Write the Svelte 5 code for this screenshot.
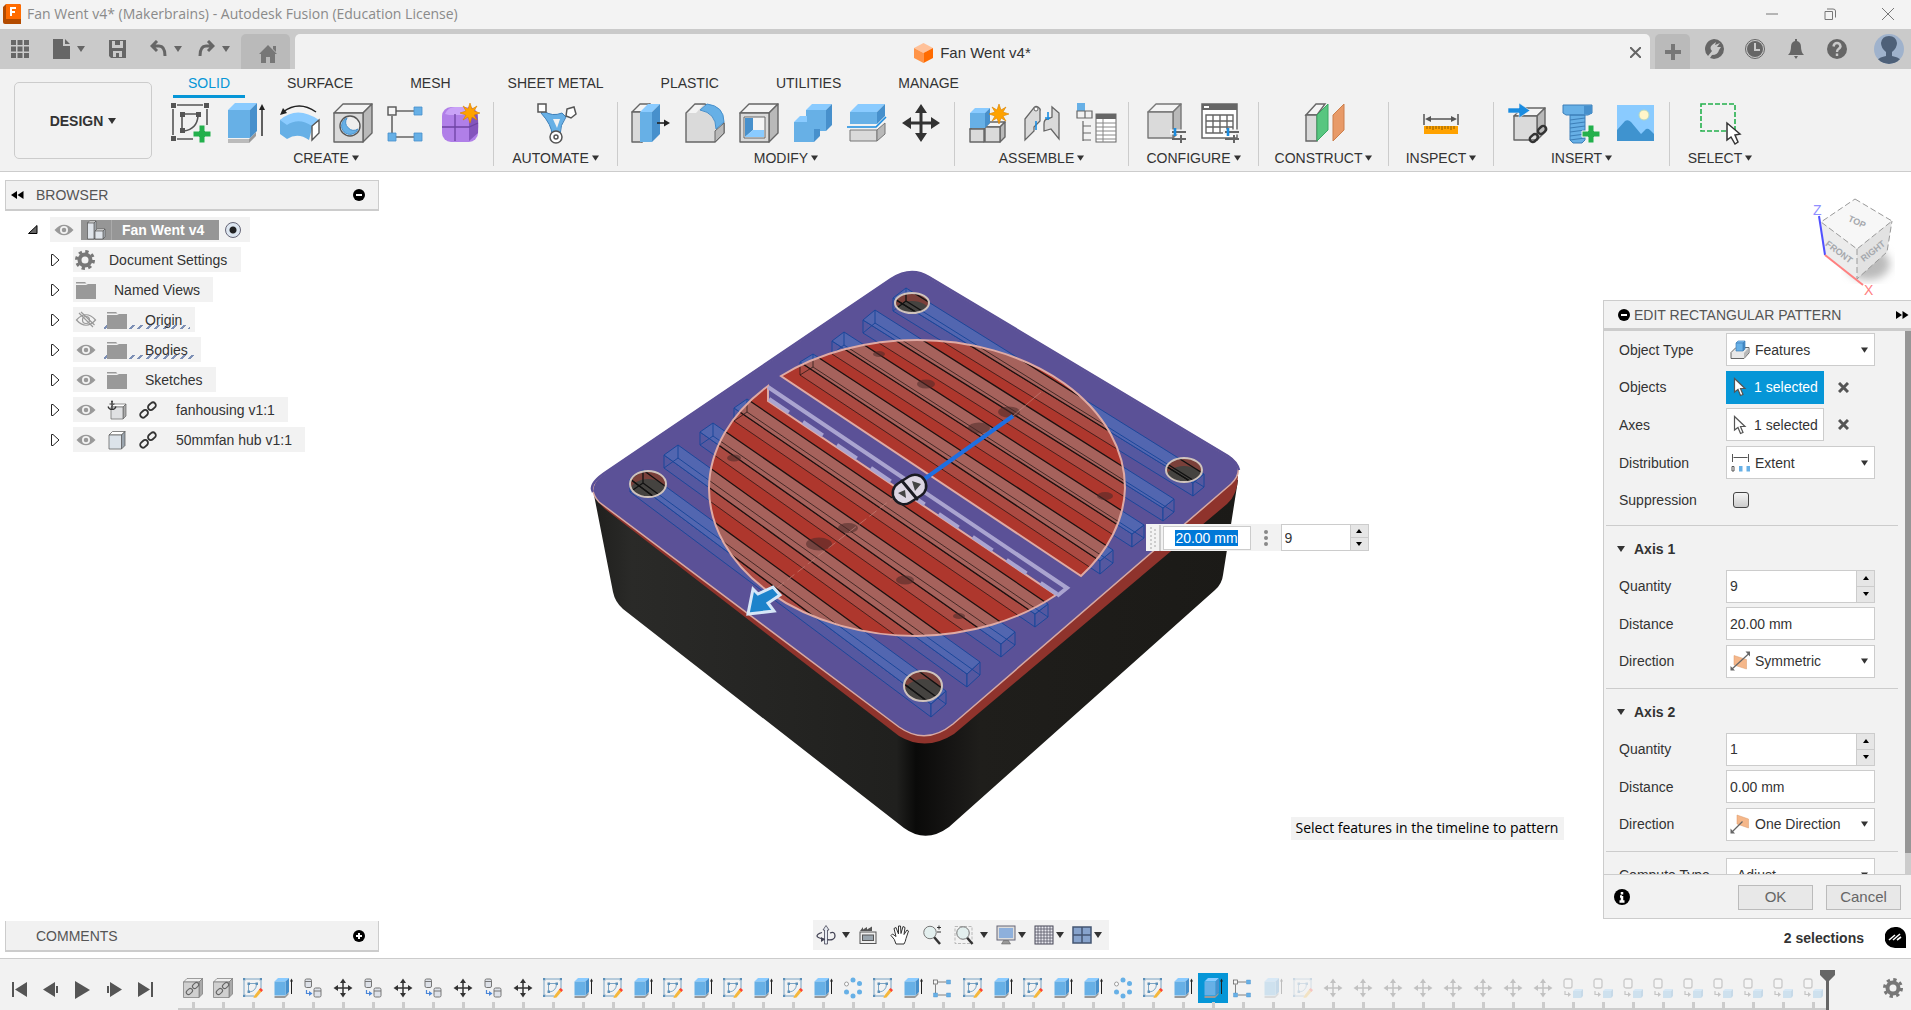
<script>
    import { onMount } from 'svelte'

    // colours of the three faces: front, top, side
    const BLUE = ['#67b0e6', '#8acbff', '#4790cc'];
    const GREY = ['#dadada', '#f4f4f4', '#b9b9b9'];

    function cube(x, y, w, h, d, [front, top, side], line = 'none') {
        const r = x + w, b = y + h;
        return `<g stroke="${line}" stroke-width="1.4" stroke-linejoin="round">
            <path fill="${top}" d="M${x} ${y + d}L${x + d} ${y}H${r}L${r - d} ${y + d}Z"/>
            <path fill="${side}" d="M${r - d} ${y + d}L${r} ${y}V${b - d}L${r - d} ${b}Z"/>
            <path fill="${front}" d="M${x} ${y + d}H${r - d}V${b}H${x}Z"/></g>`;
    }

    const spark = (x, y) => `<path transform="translate(${x} ${y})" fill="#ffa200" stroke="#d98200" stroke-width=".6"
        d="M0-10L2-4 7-7 4-2 10 0 4 2 7 7 2 4 0 10-2 4-7 7-4 2-10 0-4-2-7-7-2-4Z"/>`;
    const plus = (x, y) => `<path transform="translate(${x} ${y})" fill="#23b04c" stroke="#f2f2f2" stroke-width="1"
        d="M-3-9H3V-3H9V3H3V9H-3V3H-9V-3H-3Z"/>`;
    const chain = `<g fill="none" stroke="#333" stroke-width="2.4"><rect x="-3" y="-6" width="6" height="9" rx="3" transform="translate(3 -3) rotate(48)"/>
        <rect x="-3" y="-3" width="6" height="9" rx="3" transform="translate(-3 3) rotate(48)"/></g>`;
    const sliders = (x, y) => `<g transform="translate(${x} ${y})"><path stroke="#f2f2f2" stroke-width="5" d="M-2 0H15"/>
        <path stroke="#666" stroke-width="2" d="M0 0H14M0 7H14M9 3V11"/><path stroke="#1a8ce0" stroke-width="2.6" d="M3-4V4"/></g>`;
    const move = `<path fill="#333" d="M20 1l6 9h-4.500v8.500h8.500V14l9 6-9 6v-4.500h-8.500V30h4.500l-6 9-6-9h4.500v-8.500H10V26l-9-6 9-6v4.500h8.500V10H14z"/>`;
    const slots = `<path stroke="#666" stroke-width="1.600" d="M9 8H27M5 13V31M9 34H27"/><rect x="1" y="4" width="8" height="8" fill="#f6f6f6" stroke="#555" stroke-width="1.400"/>
        <path fill="#67b0e6" stroke="#4790cc" stroke-width=".8" d="M27 4h8v8h-8zM27 30h8v8h-8zM1 30h8v8H1z"/>`;
    const sketch = `<path fill="none" stroke="#555" stroke-width="1.600" d="M6 2H32M2 6V32M36 6V22M6 36H22M11 14V26M14 11H26M27 13Q26 26 13 28"/>
        <path fill="#555" d="M0 0h5v5H0zM33 0h5v5h-5zM0 33h5v5H0zM9 9h5v5H9zM25 9h5v5h-5zM9 25h5v5H9z"/>`;

    const icons = {
        sketch: sketch + plus(31, 31),
        extrude: `<path fill="#999" d="M3 36H24L31 29V33L24 40H3Z"/><path fill="#bbb" d="M3 36H24V40H3Z"/>`
            + cube(3, 0, 29, 35, 7, BLUE) + '<path stroke="#222" stroke-width="1.400" d="M37 4V33"/><path fill="#222" d="M37 1l3 6h-6z"/>',
        revolve: `<path fill="#67b0e6" d="M1 17Q18 7 35 18L30 37Q19 29 8 36L1 31Z"/><path fill="#8acbff" d="M1 17Q18 2 40 17L33 23Q20 14 8 22Z"/>
            <path fill="#fff" stroke="#555" stroke-width="1.400" d="M33 23L40 17V30L33 37Z"/><path fill="none" stroke="#222" stroke-width="1.500" d="M4 9Q20-3 37 9"/><path fill="#222" d="M1 12l3-7 4 5z"/>`,
        hole: cube(1, 1, 38, 38, 9, GREY, '#666') + `<circle cx="17" cy="23" r="10" fill="#eee" stroke="#555" stroke-width="1.400"/>
            <path fill="#67b0e6" stroke="#4790cc" d="M14 15a8.500 8.500 0 1 0 11 11A8 8 0 0 1 14 15Z"/>`,
        pattern: slots,
        form: `<rect x="1" y="4" width="36" height="35" rx="9" fill="#b07fe8"/><path fill="#c9a2f7" d="M4 11Q7 4 14 4H30L26 12H8Z"/><path fill="#8455bd" d="M28 12L35 8Q38 14 37 30L28 38Z"/>
            <path fill="none" stroke="#6d43a3" stroke-width="1.300" d="M14 11V38M1 24H28L37 20"/>` + spark(29, 10),
        automate: `<path fill="#67b0e6" stroke="#3d7fb8" d="M8 8Q16 14 26 10L30 14Q24 22 24 32H16Q16 22 5 10Z"/><path fill="#f2f2f2" d="M17 16h7l-3 9z"/>
            <g fill="#fff" stroke="#555" stroke-width="1.500"><path d="M2 1h8v8H2zM31 6l7-2 2 7-5 4-5-2z"/><circle cx="20" cy="34" r="6"/><circle cx="20" cy="34" r="2"/></g>`,
        pushPull: cube(1, 1, 18, 38, 8, GREY, '#666') + cube(9, 1, 20, 38, 8, BLUE) + '<path stroke="#222" stroke-width="1.600" d="M26 20H35"/><path fill="#222" d="M39 20l-6-3.500v7z"/>',
        fillet: `<path fill="#dadada" stroke="#666" stroke-width="1.400" d="M1 10L10 1H20L39 20V30L30 39H1Z"/><path fill="#b9b9b9" stroke="#666" d="M30 28L39 20V30L30 39Z"/>
            <path fill="#67b0e6" stroke="#4790cc" d="M15 7L22 1Q39 3 39 19L31 26Q31 10 15 7Z"/><path fill="#f4f4f4" d="M3 10L10 2H18L11 10Z"/>`,
        shell: cube(1, 1, 38, 38, 9, GREY, '#666') + '<path fill="#f4f4f4" stroke="#666" d="M5 14H26V35H5Z"/><path fill="#4790cc" d="M6 15H14V27L6 34Z"/><path fill="#8acbff" d="M14 27H25V34H6Z"/>',
        combine: cube(13, 1, 26, 27, 6, BLUE) + cube(1, 13, 26, 26, 6, BLUE) + '<path fill="#67b0e6" d="M14 9H33V26H21V38H3V20H14Z"/>',
        split: cube(3, 1, 35, 20, 8, BLUE) + '<path fill="#dadada" stroke="#777" d="M3 27H30V38H3Z"/><path fill="#b9b9b9" stroke="#777" d="M30 27L38 20V31L30 38Z"/><path fill="none" stroke="#1a8ce0" stroke-width="1.600" d="M0 24H29L39 14"/>',
        move,
        component: cube(2, 22, 18, 17, 4, GREY, '#666') + cube(17, 19, 20, 20, 5, GREY, '#666') + cube(2, 5, 20, 20, 5, BLUE) + spark(31, 11),
        joint: `<path fill="#dadada" stroke="#666" stroke-width="1.300" d="M3 16L11 6Q13 2 16 4T18 8V18L12 24V28L3 37ZM22 21Q22 16 26 16L30 14V4L37 10V36L29 26L22 28Z"/>
            <circle cx="14" cy="6" r="2" fill="#fff" stroke="#666"/><path stroke="#1a8ce0" stroke-width="1.600" d="M14 18V27M26 9V17M23 15H28"/>`,
        bom: `<rect x="1" y="0" width="8" height="8" fill="#67b0e6"/><path fill="none" stroke="#666" stroke-width="1.200" d="M1 8H16V15H1ZM9 8V15M7 18V38M7 23H15M7 30H15M7 37H15"/>
            <rect x="20" y="11" width="20" height="28" fill="#fff" stroke="#666"/><path fill="#666" d="M20 11h20v5H20z"/><path stroke="#888" d="M20 20H40M20 24H40M20 28H40M20 32H40M20 36H40M27 16V39"/>`,
        configure: cube(1, 1, 33, 34, 8, GREY, '#777') + sliders(25, 29),
        table: `<rect x="1" y="1" width="35" height="34" fill="#fff" stroke="#666" stroke-width="1.500"/><path fill="#666" d="M1 1h35v6H1z"/><path fill="#fff" d="M3 3h5v2H3z"/>
            <path fill="none" stroke="#666" stroke-width="1.400" d="M5 12H32V30H5ZM5 18H32M5 24H32M12 12V30M19 12V30M26 12V30"/>` + sliders(24, 29),
        construct: `<path fill="#f4f4f4" stroke="#666" stroke-width="1.400" d="M2 12L12 1H21L13 12Z"/><path fill="#dadada" stroke="#666" stroke-width="1.400" d="M2 12H13V38H2Z"/>
            <path fill="#58c680" stroke="#3aa863" d="M13 12L24 1V27L13 38Z"/><path fill="#e89a68" stroke="#cc7f4c" d="M29 12L40 1V27L29 38Z"/>`,
        measure: `<path fill="none" stroke="#555" stroke-width="1.500" d="M3 11V22M37 11V22M6 16H34"/><path fill="#555" d="M4 16l6-3v6zM36 16l-6-3v6z"/>
            <path fill="#ffa200" d="M3 23h34v8H3z"/><path stroke="#8a5a00" d="M6 23v3M9 23v3M12 23v4M15 23v3M18 23v3M21 23v4M24 23v3M27 23v3M30 23v4M33 23v3"/>`,
        insert: cube(6, 5, 31, 32, 8, GREY, '#666') + '<path fill="#1a8ce0" stroke="#f2f2f2" stroke-width=".6" d="M0 5h11V0l11 7.500L11 15v-5H0z"/>'
            + `<g transform="translate(30 31)">${chain}</g>`,
        bolt: `<path fill="#67b0e6" stroke="#3d7fb8" d="M1 2h29v8l-4 2H4l-3-2zM8 12h15v25l-3 3h-9l-3-3z"/><path fill="#4790cc" d="M22 3h8v8h-8z"/>
            <path stroke="#3d7fb8" stroke-width="1.200" d="M8 17L23 15M8 21L23 19M8 25L23 23M8 29L23 27M8 33L23 31M8 37L23 35"/>` + plus(29, 31),
        canvas: `<rect x="1" y="2" width="37" height="36" fill="#8acbff"/><circle cx="28" cy="12" r="5" fill="#fff6c9" stroke="#b7d9c0"/>
            <path fill="#3f93cf" d="M1 27L9 18Q12 16 15 19L25 31 30 26Q32 25 34 27L38 31V38H1Z"/>`,
        select: `<rect x="1" y="1" width="34" height="27" fill="none" stroke="#23b04c" stroke-width="1.600" stroke-dasharray="5 2"/>
            <path fill="#fff" stroke="#333" stroke-width="1.500" d="M27 20v17l4-3 4 7 3-2-3-7 5-1z"/>`,
        features: `<path fill="#e8e8e8" stroke="#666" stroke-width="2" d="M2 25L12 15H38V26L28 37H2Z"/><path fill="#b9b9b9" d="M28 26L37 16V26L28 36Z"/>` + cube(12, 2, 18, 20, 4, BLUE, '#3d7fb8'),
        extent: `<path fill="none" stroke="#555" stroke-width="2" d="M5 2V18M37 2V18M7 9H35"/><path fill="#fff" stroke="#555" stroke-width="2" d="M4 27h4v9H4z"/>
            <path fill="#67b0e6" d="M18 26h7v11h-7zM33 26h7v11h-7z"/>`,
        symmetric: `<path fill="#f5b78a" stroke="#dc9a6b" d="M8 9L33 17V36L8 28Z"/><path stroke="#666" stroke-width="2.400" d="M4 36L38 5"/><path fill="#666" d="M1 39V30l9 9zM40 1v10L31 1z"/>`,
        oneWay: `<path fill="#f5b78a" stroke="#dc9a6b" d="M14 2L37 10V28L14 20Z"/><path stroke="#666" stroke-width="2.400" d="M4 36L25 15"/><path fill="#666" d="M1 39V29l9 10z"/>`,
        cursor: '<path fill="#fff" stroke="#555" stroke-width="2.400" d="M9 3v27l7-5 5 12 5-2-5-12h9z"/>',
        eye: '<path fill="#999" d="M1 20Q20-1 39 20 20 41 1 20Z"/><circle cx="20" cy="20" r="8" fill="#f2f2f2"/><circle cx="20" cy="20" r="4.500" fill="#999"/>',
        eyeOff: '<g fill="none" stroke="#999" stroke-width="2.400"><path d="M1 20Q20-1 39 20 20 41 1 20Z"/><circle cx="20" cy="20" r="7"/><path d="M6 6L34 34M10 4L37 30"/></g>',
        folder: '<path fill="#999" d="M0 4h18l3 3H0zM0 10h20l4-2h16v30H0z"/>',
        gear: `<g fill="none" stroke="#777"><circle cx="20" cy="20" r="11" stroke-width="8"/><circle cx="20" cy="20" r="17" stroke-width="6" stroke-dasharray="6.676 6.676"/></g>`,
        assembly: cube(3, 2, 17, 36, 4, ['#dfe4ea', '#fff', '#c0c8d0'], '#555') + cube(18, 18, 20, 20, 4, ['#dfe4ea', '#fff', '#c0c8d0'], '#555'),
        anchored: cube(8, 8, 30, 30, 6, ['#dfe0e2', '#fff', '#aaa'], '#666') + '<path fill="none" stroke="#333" stroke-width="2.400" d="M10 4V18M5 8H15M2 13Q4 19 10 19T18 13"/><circle cx="10" cy="3" r="2" fill="#333"/>',
        body: cube(4, 3, 32, 35, 7, ['#dce3ea', '#fff', '#9ba5ae'], '#555'),
        chain: `<g transform="translate(20 20) scale(1.900)">${chain.replace('2.4', '1.9')}</g>`,
        // timeline
        tLink: cube(1, 1, 38, 38, 7, ['#d0d0d0', '#eee', '#aaa'], '#777') + `<g transform="translate(19 21) scale(1.500)">${chain.replace('2.4', '1.5').replace('#333', '#666')}</g>`,
        tSketch: sketch.replaceAll('#555', '#5b8fb8') + '<path fill="#f5b83d" d="M22 36L33 22l5 4-11 13-6 1z"/><path fill="#f43" d="M32 23l3-3 5 4-3 4z"/>',
        tExtrude: `<path fill="#999" d="M3 36H24L31 29V33L24 40H3Z"/>` + cube(3, 0, 29, 35, 7, BLUE) + '<path stroke="#222" stroke-width="2" d="M37 4V32"/><path fill="#222" d="M37 1l3 6h-6z"/>',
        tCopy: `<g fill="#dde1e8" stroke="#777" stroke-width="2"><rect x="4" y="2" width="13" height="17" rx="3"/><rect x="22" y="20" width="14" height="18" rx="3"/><path d="M4 7H17M22 26H36"/></g>
            <path fill="none" stroke="#4a86d8" stroke-width="2.400" d="M7 24V31H14"/><path fill="#4a86d8" d="M19 31l-7-5v10z"/>`,
        tMove: move,
        tCircular: `<g fill="#67b0e6"><circle cx="20" cy="4" r="5"/><circle cx="33" cy="11" r="5"/><circle cx="33" cy="28" r="5"/><circle cx="20" cy="36" r="5"/><circle cx="7" cy="28" r="5"/></g><circle cx="7" cy="12" r="4" fill="#fff" stroke="#888" stroke-width="1.600"/>`,
        tPattern: slots,
        tPaste: `<rect x="2" y="2" width="16" height="18" rx="4" fill="#fff" stroke="#555" stroke-width="2.600"/>` + cube(20, 22, 20, 18, 4, BLUE) + '<path fill="none" stroke="#444" stroke-width="2.400" d="M4 26V33H11"/><path fill="#444" d="M16 33l-6-5v10z"/>',
        // navigation bar
        orbit: '<path fill="none" stroke="#445" stroke-width="2.600" d="M12 15Q2 18 2 22T20 29 38 22 28 16"/><path fill="#e8ecf2" stroke="#445" stroke-width="1.600" d="M20 1l6 9h-3v28h-6V10h-3z"/><path fill="#445" d="M10 24l8 5-8 5z"/>',
        look: '<path fill="#555" d="M4 12L10 4v5l8-5v5l10-6v9z"/><rect x="4" y="14" width="32" height="23" fill="#eee" stroke="#555" stroke-width="2"/><rect x="9" y="20" width="22" height="11" fill="#9aa5ae" stroke="#555" stroke-width="2"/>',
        pan: '<path fill="#fff" stroke="#333" stroke-width="2" d="M12 38Q10 28 2 21L5 18 12 23 8 7 12 5 17 18 17 2H21L22 17 26 3 30 5 28 19 34 10 37 12 32 27Q31 33 28 38Z"/>',
        zoom: '<path stroke="#333" stroke-width="5" d="M24 24L36 38"/><circle cx="16" cy="15" r="12.500" fill="#e3efee" stroke="#777" stroke-width="2"/><path stroke="#333" stroke-width="2" d="M30 5h8M34 1v8M30 14h8"/>',
        zoomWindow: '<rect x="2" y="3" width="34" height="34" fill="none" stroke="#aaa" stroke-width="1.600" stroke-dasharray="6 3"/><path stroke="#333" stroke-width="5" d="M25 24L37 38"/><circle cx="18" cy="16" r="12.500" fill="#e3efee" stroke="#777" stroke-width="2"/>',
        display: '<rect x="2" y="2" width="36" height="28" fill="#ddd" stroke="#667" stroke-width="2"/><rect x="6" y="6" width="28" height="20" fill="#8eb0dc"/><path fill="#999" stroke="#555" d="M15 31h10l4 7H11z"/>',
        grid: '<rect x="2" y="2" width="36" height="36" fill="#e8e8ee" stroke="#445" stroke-width="2"/><path stroke="#556" stroke-width="1.600" d="M8 2V38M14 2V38M20 2V38M26 2V38M32 2V38M2 8H38M2 14H38M2 20H38M2 26H38M2 32H38"/>',
        views: '<rect x="2" y="4" width="36" height="32" fill="#87a3cc" stroke="#445672" stroke-width="3"/><path stroke="#445672" stroke-width="3" d="M20 4V36M2 20H38"/>'
    };

    const tabs = ['SOLID', 'SURFACE', 'MESH', 'SHEET METAL', 'PLASTIC', 'UTILITIES', 'MANAGE'];

    const groups = [
        { name: 'CREATE', width: 329, tools: ['sketch', 'extrude', 'revolve', 'hole', 'pattern', 'form'] },
        { name: 'AUTOMATE', width: 124, tools: ['automate'] },
        { name: 'MODIFY', width: 337, tools: ['pushPull', 'fillet', 'shell', 'combine', 'split', 'move'] },
        { name: 'ASSEMBLE', width: 174, tools: ['component', 'joint', 'bom'] },
        { name: 'CONFIGURE', width: 130, tools: ['configure', 'table'] },
        { name: 'CONSTRUCT', width: 130, tools: ['construct'] },
        { name: 'INSPECT', width: 105, tools: ['measure'] },
        { name: 'INSERT', width: 176, tools: ['insert', 'bolt', 'canvas'] },
        { name: 'SELECT', width: 100, tools: ['select'] }
    ];

    const tree = [
        { name: 'Document Settings', icons: ['gear'], kind: 'document-settings' },
        { name: 'Named Views', icons: ['folder'], kind: '' },
        { name: 'Origin', icons: ['eyeOff', 'folder'], kind: 'hatched' },
        { name: 'Bodies', icons: ['eye', 'folder'], kind: 'hatched' },
        { name: 'Sketches', icons: ['eye', 'folder'], kind: '' },
        { name: 'fanhousing v1:1', icons: ['eye', 'anchored', 'chain'], kind: '' },
        { name: '50mmfan hub v1:1', icons: ['eye', 'body', 'chain'], kind: '' }
    ];

    const axes = [
        { name: 'Axis 1', quantity: '9', distance: '20.00 mm', direction: 'Symmetric', icon: 'symmetric' },
        { name: 'Axis 2', quantity: '1', distance: '0.00 mm', direction: 'One Direction', icon: 'oneWay' }
    ];

    const navTools = [
        { icon: 'orbit', menu: 'far' }, { icon: 'look' }, { icon: 'pan' }, { icon: 'zoom' },
        { icon: 'zoomWindow', menu: 'far' }, { icon: 'display', menu: 'near' }, { icon: 'grid', menu: 'near' }, { icon: 'views', menu: 'near' }
    ];

    const L = 'tLink', S = 'tSketch', E = 'tExtrude', C = 'tCopy', M = 'tMove', O = 'tCircular', P = 'tPattern', N = 'tPaste';
    const timeline = [
        L, L, S, E, C, M, C, M, C, M, C, M, S, E, S, E, S, E, S, E, S, E, O, S, E, P, S, E, S, E, E, O, S, E, E, P,
        E, S, M, M, M, M, M, M, M, M, N, N, N, N, N, N, N, N, N
    ];
    const selectedStep = 34;

    // pattern slots: left end (back, front), right end (back, front)
    const bars = [
        [905, 288, 892, 298, 1203, 474, 1192, 483],
        [874, 310, 862, 320, 1173, 499, 1162, 508],
        [843, 332, 831, 341, 1143, 525, 1131, 534],
        [812, 354, 799, 362, 1112, 550, 1099, 561],
        [746, 399, 733, 408, 1047, 604, 1034, 614],
        [712, 423, 699, 432, 1014, 632, 1000, 644],
        [677, 445, 663, 455, 979, 662, 966, 674],
        [642, 470, 629, 479, 945, 691, 930, 704]
    ];
    const holes = [[911, 303, 17, 10], [647, 484, 18, 13], [922, 686, 19, 15], [1183, 470, 18, 12]];
    const smudges = [[878, 354, 6], [925, 384, 9], [1008, 412, 11], [978, 428, 11], [1104, 496, 8], [733, 458, 7], [847, 528, 10], [818, 544, 13], [904, 580, 9], [958, 616, 6]];

    let valueBox;

    onMount(() => {
        valueBox.focus();
        valueBox.select();
    });
</script>

{#snippet icon(name, size)}
    <svg class="icon" viewBox="0 0 40 40" width={size} height={size} aria-hidden="true">{@html icons[name]}</svg>
{/snippet}

{#snippet caret()}
    <svg class="caret" viewBox="0 0 8 6" width="8" height="6" aria-hidden="true"><path d="M0 0H8L4 6Z" /></svg>
{/snippet}

{#snippet bar(b)}
    <path class="side" d="M{b[2]} {b[3]}L{b[6]} {b[7]}V{b[7] + 13}L{b[2]} {b[3] + 13}Z" />
    <path class="side" d="M{b[6]} {b[7]}L{b[4]} {b[5]}V{b[5] + 13}L{b[6]} {b[7] + 13}Z" />
    <path class="top" d="M{b[0]} {b[1]}L{b[4]} {b[5]}L{b[6]} {b[7]}L{b[2]} {b[3]}Z" />
    <path class="line" d="M{b[2]} {b[3] + 13}L{b[0]} {b[1] + 13}V{b[1]}M{b[0]} {b[1] + 13}L{b[4]} {b[5] + 13}" />
{/snippet}

{#snippet spinner()}
    <span class="spinner">
        <button aria-label="Increase"><svg viewBox="0 0 6 4" width="6" height="4"><path d="M0 4H6L3 0Z" /></svg></button>
        <button aria-label="Decrease"><svg viewBox="0 0 6 4" width="6" height="4"><path d="M0 0H6L3 4Z" /></svg></button>
    </span>
{/snippet}

<div class="app">
    <header class="title-bar">
        <svg width="18" height="20" viewBox="0 0 18 20" aria-hidden="true">
            <path fill="#b34b00" d="M0 3L3 0H16Q18 0 18 2V20H2Q0 20 0 18Z" />
            <path fill="#ff6b00" d="M3 0H16Q18 0 18 2V15H3Z" />
            <path fill="none" stroke="#fff" stroke-width="2" d="M8 12V4H13M8 8H12" />
        </svg>
        <span class="title">Fan Went v4* (Makerbrains) - Autodesk Fusion (Education License)</span>
        <div class="window-buttons">
            <button aria-label="Minimize"><svg width="12" height="12" viewBox="0 0 12 12"><path d="M0 6H12" /></svg></button>
            <button aria-label="Restore"><svg width="12" height="12" viewBox="0 0 12 12"><path d="M1 3.500H8.500V11.500H1ZM3 1H9Q11.500 1 11.500 3V9.500" /></svg></button>
            <button aria-label="Close window"><svg width="12" height="12" viewBox="0 0 12 12"><path d="M0 0L12 12M12 0L0 12" /></svg></button>
        </div>
    </header>

    <div class="document-bar">
        <div class="quick">
            <button aria-label="Data panel"><svg width="18" height="18" viewBox="0 0 18 18"><path d="M0 0h5v5H0zM6.500 0h5v5h-5zM13 0h5v5h-5zM0 6.500h5v5H0zM6.500 6.500h5v5h-5zM13 6.500h5v5h-5zM0 13h5v5H0zM6.500 13h5v5h-5zM13 13h5v5h-5z" /></svg></button>
            <button aria-label="File"><svg width="17" height="20" viewBox="0 0 17 20"><path d="M0 0H10V7H17V20H0ZM12 0L17 5H12Z" /></svg>{@render caret()}</button>
            <button aria-label="Save"><svg width="17" height="18" viewBox="0 0 17 18"><path fill-rule="evenodd" d="M0 0H17V18H2L0 16ZM3 1V8H14V1H11V5H6V1ZM4 11V17H7V13H10V17H13V11Z" /></svg></button>
            <div class="history">
                <button aria-label="Undo"><svg width="17" height="17" viewBox="0 0 17 17"><path class="stroke" d="M7 1L2 6L7 11M2 6H9Q15 6 15 16" /></svg>{@render caret()}</button>
                <button aria-label="Redo"><svg width="17" height="17" viewBox="0 0 17 17"><path class="stroke" d="M10 1L15 6L10 11M15 6H8Q2 6 2 16" /></svg>{@render caret()}</button>
            </div>
        </div>
        <button class="home" aria-label="Home"><svg width="18" height="18" viewBox="0 0 18 18"><path d="M9 0L18 9H16V18H11V12H7V18H2V9H0ZM14 1h3v6l-3-3z" /></svg></button>
        <div class="document">
            <svg width="19" height="20" viewBox="0 0 19 20" aria-hidden="true">
                <path fill="#ffc199" d="M9.500 0L19 5L9.500 10L0 5Z" /><path fill="#ff9448" d="M0 5L9.500 10V20L0 15Z" /><path fill="#ff6b00" d="M19 5L9.500 10V20L19 15Z" />
            </svg>
            <span>Fan Went v4*</span>
            <button class="close" aria-label="Close document"><svg width="11" height="11" viewBox="0 0 11 11"><path d="M0 0L11 11M11 0L0 11" /></svg></button>
        </div>
        <button class="new-tab" aria-label="New document"><svg width="16" height="16" viewBox="0 0 16 16"><path d="M6 0h4v6h6v4h-6v6H6v-6H0V6h6z" /></svg></button>
        <div class="account">
            <button aria-label="Extensions"><svg width="20" height="20" viewBox="0 0 20 20"><path fill-rule="evenodd" d="M10 0A10 10 0 0 1 20 10A10 10 0 0 1 10 20L6 19L8 16Q14 16 15 11L17 8 13 8 16 4 11 6 12 3 8 6Q5 9 8 12L4 17A10 10 0 0 1 10 0Z" /></svg></button>
            <button aria-label="Job status"><svg width="20" height="20" viewBox="0 0 20 20"><circle cx="10" cy="10" r="8" /><circle class="stroke thin" cx="10" cy="10" r="9.500" /><path stroke="#cacaca" stroke-width="2" fill="none" d="M10 4V11H15" /></svg></button>
            <button aria-label="Notifications"><svg width="20" height="20" viewBox="0 0 20 20"><path d="M2 16Q5 13 5 8Q5 3 9 2V0H11V2Q15 3 15 8Q15 13 18 16ZM8 17H12L10 20Z" /></svg></button>
            <button aria-label="Help"><svg width="20" height="20" viewBox="0 0 20 20"><circle cx="10" cy="10" r="10" /><path stroke="#cacaca" stroke-width="2.400" fill="none" d="M6.500 7.500Q7 4 10 4T13.500 7.500Q13 9 11.500 10T10 13M10 14.500V17" /></svg></button>
            <button class="avatar" aria-label="Profile"><svg width="30" height="30" viewBox="0 0 30 30"><path fill="#4e6078" d="M3 26Q6 23 12 22V18Q7 14 7 9Q8 2 15 2T23 9Q23 14 18 18V22Q24 23 27 26Q22 30 15 30T3 26Z" /></svg></button>
        </div>
    </div>

    <div class="ribbon">
        <button class="workspace-menu">DESIGN {@render caret()}</button>
        <div class="ribbon-main">
            <nav class="tabs">
                {#each tabs as tab, i}
                    <button class:active={i === 0}>{tab}</button>
                {/each}
            </nav>
            <div class="groups">
                {#each groups as group}
                    <div class="group" style="min-width: {group.width}px">
                        <div class="tools">
                            {#each group.tools as tool}
                                <button aria-label={tool}>{@render icon(tool, 40)}</button>
                            {/each}
                        </div>
                        <button class="group-name">{group.name} {@render caret()}</button>
                    </div>
                {/each}
            </div>
        </div>
    </div>

    <main>
        <svg class="model" viewBox="580 260 680 590" width="680" height="590" role="img" aria-label="Fan housing">
            <defs>
                <linearGradient id="wall" x1="592" x2="1238" y1="0" y2="0" gradientUnits="userSpaceOnUse">
                    <stop offset="0" stop-color="#1f1f1d" />
                    <stop offset=".06" stop-color="#2a2a28" />
                    <stop offset=".47" stop-color="#20201e" />
                    <stop offset=".5" stop-color="#0a0a09" />
                    <stop offset=".55" stop-color="#151413" />
                    <stop offset=".6" stop-color="#1f1e1b" />
                    <stop offset="1" stop-color="#1b1a17" />
                </linearGradient>
                <clipPath id="grille">
                    <path d="M780 376A208 148 0 0 1 916 340A208 148 0 0 1 1124 488A208 148 0 0 1 1080 576Z" />
                    <path d="M767 386V401L1055 595A208 148 0 0 1 916 636A208 148 0 0 1 708 488A208 148 0 0 1 767 386Z" />
                </clipPath>
                <clipPath id="holes">
                    {#each holes as h}
                        <ellipse cx={h[0]} cy={h[1]} rx={h[2]} ry={h[3]} />
                    {/each}
                </clipPath>
            </defs>
            <path fill="url(#wall)" d="M593 495L612 592Q614 602 622 609L903 828Q925 844 948 827L1214 590Q1221 584 1222 575L1237 480Z" />
            <path fill="#8f332c" d="M593 486Q593 500 604 509L898 736Q925 752 953 734L1226 504Q1237 494 1237 476Z" />
            <path fill="#5b5197" stroke="#d7a9a4" stroke-width="1.500" d="M605 472L890 279Q910 266 928 277L1227 456Q1246 468 1230 484L952 724Q925 746 898 727L598 502Q583 486 605 472Z" />
            <path fill="none" stroke="#5b5197" stroke-width="2.500" d="M592 492Q587 484 605 472L890 279Q910 266 928 277L1227 456Q1236 462 1238 470" />
            <g class="blue">
                {#each bars as b}{@render bar(b)}{/each}
            </g>
            <g clip-path="url(#grille)">
                <path fill="#ae372d" d="M580 260H1260V850H580Z" />
                <g class="red">
                    {#each bars as b}{@render bar(b)}{/each}
                </g>
                {#each smudges as s}
                    <ellipse cx={s[0]} cy={s[1]} rx={s[2]} ry={s[2] / 2} fill="#4a2a28" opacity=".55" />
                {/each}
            </g>
            <g clip-path="url(#holes)">
                <path fill="#7a403a" d="M580 260H1260V850H580Z" />
                {#each holes as h}
                    <ellipse cx={h[0]} cy={h[1] + 8} rx={h[2]} ry={h[3]} fill="#454340" />
                {/each}
                <g class="dark">
                    {#each bars as b}{@render bar(b)}{/each}
                </g>
            </g>
            <g fill="none" stroke="#dfaaa4" stroke-width="2">
                <path d="M780 376A208 148 0 0 1 916 340A208 148 0 0 1 1124 488A208 148 0 0 1 1080 576Z" />
                <path d="M767 386V401L1055 595A208 148 0 0 1 916 636A208 148 0 0 1 708 488A208 148 0 0 1 767 386Z" />
                {#each holes as h}
                    <ellipse cx={h[0]} cy={h[1]} rx={h[2]} ry={h[3]} stroke="#cfc3bc" />
                {/each}
            </g>
            <path fill="none" stroke="#aaa4d0" stroke-width="4" d="M767 387L1066 588L1056 596" />
            <path fill="none" stroke="#aaa4d0" stroke-width="4" stroke-dasharray="24 17" d="M768 399L1056 594" />
            <path stroke="#c98a80" stroke-opacity=".6" stroke-dasharray="9 4" d="M776 588L892 498" />
            <path stroke="#c98a80" stroke-opacity=".6" d="M1012 416L1040 392" />
            <path stroke="#1f6fe0" stroke-width="4" d="M922 480L1012 416" />
            <g stroke-linecap="round">
                <path stroke="#1a1a22" stroke-width="25" d="M903 493L914 486" />
                <path stroke="#dcd5e2" stroke-width="20" d="M903 493L914 486" />
                <path stroke="#1a1a22" stroke-width="3" d="M901 481L916 499" />
                <path fill="#444" d="M911 481L920 484L914 491ZM897 493L904 490L905 498Z" />
            </g>
            <path fill="#1d83cb" stroke="#d6e6f7" stroke-width="3" d="M747 614L752 589L757 594L772 587L779 595L767 603L773 611Z" />
        </svg>

        <div class="left-side">
            <section class="browser">
                <h2>
                    <svg width="13" height="8" viewBox="0 0 13 8" aria-hidden="true"><path d="M6 0V8L0 4ZM12.500 0V8L6.500 4Z" /></svg>
                    BROWSER
                    <svg class="round" width="12" height="12" viewBox="0 0 12 12" aria-hidden="true"><circle cx="6" cy="6" r="6" /><path stroke="#fff" stroke-width="2" d="M3 6H9" /></svg>
                </h2>
                <ul>
                    <li class="root">
                        <svg class="open" width="10" height="9" viewBox="0 0 10 9" aria-hidden="true"><path fill="#666" stroke="#000" d="M9 .5V8.500H.5Z" /></svg>
                        <div class="node">
                            {@render icon('eye', 20)}
                            <span class="type">{@render icon('assembly', 20)}</span>
                            <span class="name">Fan Went v4</span>
                            <input type="radio" checked aria-label="Activate Fan Went v4" />
                        </div>
                    </li>
                    {#each tree as node}
                        <li>
                            <svg class="closed" width="9" height="12" viewBox="0 0 9 12" aria-hidden="true"><path fill="#fff" stroke="#222" d="M.5 .5L2 .5L8 6L2 11.500H.5Z" /></svg>
                            <div class="node {node.kind}">
                                {#each node.icons as name}{@render icon(name, 20)}{/each}
                                <span>{node.name}</span>
                            </div>
                        </li>
                    {/each}
                </ul>
            </section>
            <section class="comments">
                <h2>COMMENTS
                    <svg class="round" width="12" height="12" viewBox="0 0 12 12" aria-hidden="true"><circle cx="6" cy="6" r="6" /><path stroke="#fff" stroke-width="2" d="M3 6H9M6 3V9" /></svg>
                </h2>
            </section>
        </div>

        <div class="right-side">
            <svg class="cube" width="90" height="106" viewBox="1810 194 90 106" role="img" aria-label="View cube">
                <defs><filter id="soft"><feGaussianBlur stdDeviation="4" /></filter></defs>
                <ellipse cx="1868" cy="264" rx="22" ry="16" fill="#bbb" filter="url(#soft)" />
                <path fill="#f7f7f7" d="M1855 199L1892 221L1857 249L1821 222Z" />
                <path fill="#ececec" d="M1821 222L1857 249V279L1825 255Z" />
                <path fill="#e2e2e2" d="M1892 221L1857 249V279L1887 252Z" />
                <path fill="none" stroke="#999" stroke-dasharray="6 3" d="M1855 199L1892 221L1857 249L1821 222ZM1857 249V279L1887 252L1892 221" />
                <path stroke="#5050ff" stroke-width="2" d="M1819 216L1825 255" />
                <path stroke="#ff8080" stroke-width="2" d="M1825 255L1863 285" />
                <g font-weight="bold" font-size="9" fill="#a5a8ad" text-anchor="middle">
                    <text x="1857" y="225" transform="rotate(25 1857 222)">TOP</text>
                    <text x="1839" y="255" transform="rotate(37 1839 252)">FRONT</text>
                    <text x="1873" y="254" transform="rotate(-38 1873 251)">RIGHT</text>
                </g>
                <text x="1813" y="215" font-size="14" fill="#9090ff">Z</text>
                <text x="1864" y="295" font-size="14" fill="#ff8080">X</text>
            </svg>
            <section class="dialog">
                <h2>
                    <svg width="12" height="12" viewBox="0 0 12 12" aria-hidden="true"><circle cx="6" cy="6" r="6" /><path stroke="#fff" stroke-width="2" d="M3 6H9" /></svg>
                    EDIT RECTANGULAR PATTERN
                    <svg class="round" width="13" height="8" viewBox="0 0 13 8" aria-hidden="true"><path d="M0 0V8L6 4ZM6.500 0V8L12.500 4Z" /></svg>
                </h2>
                <div class="scroll">
                    <div class="rows">
                        <div class="row">
                            <label for="object-type">Object Type</label>
                            <span class="field">{@render icon('features', 20)}<select id="object-type"><option>Features</option></select>{@render caret()}</span>
                        </div>
                        <div class="row">
                            <span>Objects</span>
                            <button class="pick active">{@render icon('cursor', 20)}1 selected</button>
                            <button class="clear" aria-label="Clear objects"><svg width="11" height="11" viewBox="0 0 11 11"><path d="M1 1L10 10M10 1L1 10" /></svg></button>
                        </div>
                        <div class="row">
                            <span>Axes</span>
                            <button class="pick">{@render icon('cursor', 20)}1 selected</button>
                            <button class="clear" aria-label="Clear axes"><svg width="11" height="11" viewBox="0 0 11 11"><path d="M1 1L10 10M10 1L1 10" /></svg></button>
                        </div>
                        <div class="row">
                            <label for="distribution">Distribution</label>
                            <span class="field">{@render icon('extent', 20)}<select id="distribution"><option>Extent</option></select>{@render caret()}</span>
                        </div>
                        <div class="row">
                            <label for="suppression">Suppression</label>
                            <input id="suppression" type="checkbox" />
                        </div>
                    </div>
                    {#each axes as axis, i}
                        <div class="rows axis">
                            <h3>{@render caret()} {axis.name}</h3>
                            <div class="row">
                                <label for="quantity-{i}">Quantity</label>
                                <span class="field"><input id="quantity-{i}" value={axis.quantity} />{@render spinner()}</span>
                            </div>
                            <div class="row">
                                <label for="distance-{i}">Distance</label>
                                <span class="field"><input id="distance-{i}" value={axis.distance} /></span>
                            </div>
                            <div class="row">
                                <label for="direction-{i}">Direction</label>
                                <span class="field">{@render icon(axis.icon, 20)}<select id="direction-{i}"><option>{axis.direction}</option></select>{@render caret()}</span>
                            </div>
                        </div>
                    {/each}
                    <div class="rows last">
                        <div class="row">
                            <label for="compute">Compute Type</label>
                            <span class="field"><select id="compute"><option>Adjust</option></select>{@render caret()}</span>
                        </div>
                    </div>
                </div>
                <footer>
                    <svg width="16" height="16" viewBox="0 0 16 16" aria-hidden="true"><circle cx="8" cy="8" r="8" fill="#000" /><path stroke="#fff" stroke-width="2.500" d="M8 3V5.500M8 7V13M6 7.500H8M5.500 12.500H10.500" /></svg>
                    <button>OK</button>
                    <button>Cancel</button>
                </footer>
            </section>
            <p class="status">
                2 selections
                <svg width="21" height="21" viewBox="0 0 21 21" aria-hidden="true"><path fill="#000" d="M10 0A10 10 0 0 1 21 10V21H10A10 10 0 0 1 10 0Z" /><path stroke="#fff" stroke-width="1.600" d="M4 13L10 8M8 13L15 7M12 13L16 10" /></svg>
            </p>
        </div>

        <div class="value-input">
            <svg width="17" height="26" viewBox="0 0 17 26" aria-hidden="true"><path stroke="#ccc" stroke-width="2" stroke-dasharray="2 2" d="M5 2V24M9 4V24" /><path stroke="#ccc" stroke-width="2" d="M14 0V26" /></svg>
            <input class="amount" aria-label="Distance" value="20.00 mm" bind:this={valueBox} />
            <button class="more" aria-label="More"><svg width="4" height="16" viewBox="0 0 4 16"><circle cx="2" cy="2" r="2" /><circle cx="2" cy="8" r="2" /><circle cx="2" cy="14" r="2" /></svg></button>
            <span class="field"><input aria-label="Quantity" value="9" />{@render spinner()}</span>
        </div>

        <div class="hint">Select features in the timeline to pattern</div>

        <div class="nav-bar">
            {#each navTools as tool}
                <button class={tool.menu} aria-label={tool.icon}>{@render icon(tool.icon, 20)}{#if tool.menu}{@render caret()}{/if}</button>
            {/each}
        </div>
    </main>

    <div class="timeline">
        <div class="playback">
            <button aria-label="To start"><svg width="15" height="15" viewBox="0 0 15 15"><path d="M0 0H2V15H0ZM15 0V15L3 7.500Z" /></svg></button>
            <button aria-label="Step back"><svg width="16" height="15" viewBox="0 0 16 15"><path d="M12 0V15L0 7.500ZM13 4H15V11H13Z" /></svg></button>
            <button aria-label="Play"><svg width="15" height="18" viewBox="0 0 15 18"><path d="M0 0L15 9L0 18Z" /></svg></button>
            <button aria-label="Step forward"><svg width="16" height="15" viewBox="0 0 16 15"><path d="M4 0V15L16 7.500ZM1 4H3V11H1Z" /></svg></button>
            <button aria-label="To end"><svg width="15" height="15" viewBox="0 0 15 15"><path d="M13 0H15V15H13ZM0 0V15L12 7.500Z" /></svg></button>
        </div>
        <ol>
            {#each timeline as step, i}
                <li class:faded={i > selectedStep + 1} class:selected={i === selectedStep}>{@render icon(step, 20)}</li>
            {/each}
        </ol>
        <svg class="marker" width="15" height="40" viewBox="0 0 15 40" aria-hidden="true"><path fill="#666" d="M0 0H15V5L9 11V40H6V11L0 5Z" /></svg>
        <button class="settings" aria-label="Timeline settings">{@render icon('gear', 20)}</button>
    </div>
</div>

<style>
    :global(body){
        margin: 0;
        background: #fff;
    }
    .app{
        display: flex;
        flex-direction: column;
        height: 100vh;
        min-height: 960px;
        overflow: hidden;
        font-family: "Liberation Sans", Arial, sans-serif;
        font-size: 14px;
        line-height: 16px;
        color: #333;
    }
    button, input, select{
        font: inherit;
        color: inherit;
        margin: 0;
        padding: 0;
        border: 0;
        background: none;
    }
    button{
        display: flex;
        align-items: center;
        justify-content: center;
    }
    svg{
        flex: none;
        display: block;
    }
    .icon{
        overflow: visible;
    }
    h2, h3, p, ul, ol{
        margin: 0;
        padding: 0;
        font-size: 14px;
        font-weight: normal;
        list-style: none;
    }
    .caret{
        fill: #333;
    }

    .title-bar{
        display: flex;
        align-items: center;
        flex: none;
        box-sizing: border-box;
        height: 29px;
        padding: 0 10px 1px 3px;
        gap: 6px;
        background: #f3f3f3;
        color: #8a8a8a;
    }
    .title{
        flex: 1;
        font-family: "Open Sans", "Noto Sans", sans-serif;
    }
    .window-buttons{
        display: flex;
        gap: 46px;
        padding-right: 7px;
    }
    .window-buttons path{
        fill: none;
        stroke: #777;
    }

    .document-bar{
        display: flex;
        align-items: center;
        flex: none;
        box-sizing: border-box;
        height: 40px;
        padding: 5px 7px 0 11px;
        background: #cacaca;
        fill: #666;
    }
    .document-bar .caret{
        fill: #666;
        margin-left: 7px;
    }
    .stroke{
        fill: none;
        stroke: #666;
        stroke-width: 3;
    }
    .thin{
        stroke-width: 1;
    }
    .quick{
        display: flex;
        align-items: center;
        gap: 24px;
        padding: 0 11px 6px 0;
    }
    .history{
        display: flex;
        gap: 16px;
    }
    .home, .new-tab{
        height: 35px;
        background: #bababa;
        border-radius: 5px 5px 0 0;
        fill: #777;
    }
    .home{
        width: 49px;
        padding: 4px 0 0 4px;
    }
    .document{
        display: flex;
        flex: 1;
        align-items: center;
        gap: 7px;
        box-sizing: border-box;
        height: 35px;
        margin: 0 5px;
        padding-top: 2px;
        background: #f2f2f2;
        border-radius: 5px 5px 0 0;
    }
    .document span{
        margin-right: auto;
        font-size: 15px;
    }
    .document > svg{
        margin-left: auto;
    }
    .document .close{
        margin-left: -27px;
        padding-right: 9px;
    }
    .close path{
        stroke: #666;
        stroke-width: 2;
    }
    .new-tab{
        width: 35px;
    }
    .account{
        display: flex;
        align-items: center;
        gap: 21px;
        padding: 0 0 5px 14px;
    }
    .avatar{
        width: 30px;
        height: 30px;
        margin-left: 6px;
        overflow: hidden;
        border-radius: 50%;
        background: #9fb2cc;
    }

    .ribbon{
        display: flex;
        flex: none;
        box-sizing: border-box;
        height: 103px;
        padding-left: 14px;
        gap: 12px;
        background: #f2f2f2;
        border-bottom: 1px solid #ccc;
    }
    .workspace-menu{
        box-sizing: border-box;
        width: 138px;
        height: 77px;
        margin-top: 13px;
        gap: 5px;
        font-weight: bold;
        border: 1px solid #ccc;
        border-radius: 5px;
    }
    .ribbon-main{
        flex: 1;
    }
    .tabs{
        display: flex;
        gap: 27px;
        margin-left: 9px;
    }
    .tabs button{
        box-sizing: border-box;
        height: 29px;
        padding: 2px 15px 0;
        border-bottom: 3px solid transparent;
    }
    .tabs .active{
        color: #0696d7;
        border-color: #0696d7;
    }
    .groups{
        display: flex;
        margin-top: 4px;
    }
    .group{
        display: flex;
        flex-direction: column;
        align-items: center;
        gap: 7px;
        box-sizing: border-box;
        height: 64px;
        border-right: 1px solid #ccc;
    }
    .group:first-child{
        padding-right: 5px;
    }
    .group:last-child{
        border: 0;
    }
    .tools{
        display: flex;
    }
    .tools button{
        width: 54px;
        height: 41px;
    }
    .group-name{
        gap: 3px;
    }
    .group-name .caret{
        width: 7px;
    }

    main{
        position: relative;
        display: flex;
        flex: 1;
        justify-content: space-between;
    }
    .model{
        position: absolute;
        left: calc(50% - 375px);
        top: 88px;
    }
    .blue path{
        stroke: #1b479a;
        stroke-width: 1;
    }
    .blue .side{
        fill: #5558a0;
    }
    .blue .top{
        fill: #5266b0;
    }
    .blue .line, .red .line, .dark path{
        fill: none;
    }
    .red path{
        stroke: #1d1110;
        stroke-width: 1;
        stroke-opacity: .7;
    }
    .red .side{
        fill: #ab4a42;
    }
    .red .top{
        fill: #a6625c;
        stroke-width: 1.3;
        stroke-opacity: 1;
    }
    .dark path{
        stroke: #111;
        stroke-width: 1.3;
    }

    .left-side{
        position: relative;
        display: flex;
        flex-direction: column;
        justify-content: space-between;
        width: 374px;
        padding: 8px 0 6px 5px;
    }
    .browser h2, .comments h2{
        display: flex;
        align-items: center;
        box-sizing: border-box;
        height: 31px;
        padding: 0 13px 0 5px;
        gap: 12px;
        color: #555;
        background: #f1f1f1;
        border: 1px solid #ccc;
        border-bottom-width: 2px;
    }
    .comments h2{
        padding-left: 30px;
        border-top: 0;
    }
    .round{
        margin-left: auto;
    }
    .browser ul{
        display: flex;
        flex-direction: column;
        gap: 5px;
        padding-top: 6px;
    }
    .browser li{
        display: flex;
        align-items: center;
        gap: 13px;
        padding-left: 46px;
    }
    .browser .root{
        gap: 12px;
        padding-left: 23px;
    }
    .node{
        display: flex;
        align-items: center;
        height: 25px;
        padding: 0 13px 0 3px;
        gap: 11px;
        background: #f2f2f2;
    }
    .node span{
        padding-left: 7px;
    }
    .node.document-settings{
        padding: 0 14px 0 2px;
    }
    .document-settings span{
        padding-left: 3px;
    }
    .hatched{
        background-image: repeating-linear-gradient(135deg, transparent 0 2px, #7c8fb5 2px 4px, transparent 4px 6px);
        background-size: calc(100% - 36px) 4px;
        background-position: 31px 18px;
        background-repeat: no-repeat;
        background-color: #f2f2f2;
    }
    .root .node{
        gap: 0;
        padding: 0 9px 0 4px;
    }
    .root .type{
        height: 20px;
        margin-left: 7px;
        padding: 0 5px 0 5px;
        background: #969696;
        border-right: 1px solid #aaa;
    }
    .root .name{
        padding: 2px 15px 2px 10px;
        font-weight: bold;
        color: #fff;
        background: #969696;
    }
    input[type=radio]{
        appearance: none;
        width: 16px;
        height: 16px;
        margin-left: 6px;
        border: 1px solid #667;
        border-radius: 50%;
        background: radial-gradient(circle, #222 0 3px, #dde6f0 4px);
    }

    .right-side{
        position: relative;
        display: flex;
        flex-direction: column;
        align-items: flex-end;
        width: 308px;
    }
    .cube{
        margin: 22px 11px 0 0;
    }
    .dialog{
        display: flex;
        flex-direction: column;
        box-sizing: border-box;
        width: 308px;
        height: 619px;
        background: #f2f2f2;
        border: 1px solid #ccc;
        border-right: 0;
    }
    .dialog h2{
        display: flex;
        align-items: center;
        flex: none;
        box-sizing: border-box;
        height: 30px;
        padding: 0 2px 0 14px;
        gap: 4px;
        color: #555;
        border-bottom: 3px solid #ccc;
    }
    .scroll{
        flex: 1;
        overflow: hidden;
        background: linear-gradient(#969696, #969696) right top / 6px 522px no-repeat, linear-gradient(#ccc, #ccc) right top / 6px 100% no-repeat;
        border-bottom: 1px solid #ccc;
    }
    .rows{
        display: grid;
        grid-auto-rows: 1fr;
        height: 188px;
        margin: 0 13px 0 2px;
        padding-bottom: 6px;
        border-bottom: 1px solid #ccc;
    }
    .axis{
        height: 150px;
        padding: 4px 0 8px;
    }
    .last{
        height: 37px;
        padding-top: 4px;
        border: 0;
    }
    .rows h3{
        display: flex;
        align-items: center;
        gap: 9px;
        padding-left: 11px;
        font-weight: bold;
    }
    .row{
        display: grid;
        grid-template-columns: 107px auto auto;
        justify-content: start;
        align-items: center;
        padding-left: 13px;
    }
    .field{
        display: flex;
        align-items: center;
        box-sizing: border-box;
        width: 149px;
        height: 33px;
        padding-left: 3px;
        background: #fff;
        border: 1px solid #ccc;
    }
    .field > svg.icon{
        margin-right: 5px;
    }
    .field > .caret{
        margin: 0 6px 0 auto;
        width: 7px;
    }
    .field select{
        flex: 1;
        min-width: 0;
        appearance: none;
    }
    .last select{
        padding-left: 7px;
    }
    .field input{
        flex: 1;
        min-width: 0;
    }
    .spinner{
        display: flex;
        flex-direction: column;
        align-self: stretch;
        width: 17px;
        background: #e6e6e6;
        border-left: 1px solid #ccc;
    }
    .spinner button{
        flex: 1;
    }
    .spinner button:first-child{
        border-bottom: 1px solid #ccc;
    }
    .pick{
        box-sizing: border-box;
        width: 98px;
        height: 33px;
        padding-right: 2px;
        gap: 4px;
        background: #fff;
        border: 1px solid #ccc;
    }
    .pick.active{
        color: #fff;
        background: #0696d7;
        border-color: #0696d7;
    }
    .clear{
        padding-left: 14px;
    }
    .clear path{
        stroke: #555;
        stroke-width: 3;
    }
    input[type=checkbox]{
        appearance: none;
        box-sizing: border-box;
        width: 16px;
        height: 16px;
        margin-left: 7px;
        border: 1px solid #444;
        border-radius: 3px;
        background: linear-gradient(#f5f5f5, #ccc);
    }
    .dialog footer{
        display: flex;
        align-items: center;
        flex: none;
        box-sizing: border-box;
        height: 43px;
        padding: 1px 10px 0;
        gap: 13px;
    }
    .dialog footer svg{
        margin-right: auto;
    }
    .dialog footer button{
        box-sizing: border-box;
        width: 75px;
        height: 25px;
        font-size: 15px;
        color: #666;
        background: #e8e8e8;
        border: 1px solid #bbb;
    }
    .status{
        display: flex;
        align-items: center;
        gap: 21px;
        padding: 8px 5px 0 0;
        font-weight: bold;
    }

    .value-input{
        position: absolute;
        left: calc(50% + 190px);
        top: 352px;
        display: flex;
        align-items: center;
        height: 27px;
        background: #f2f2f2;
    }
    .value-input .amount{
        box-sizing: border-box;
        width: 88px;
        height: 24px;
        text-align: center;
        background: #fff;
        border: 1px solid #ccc;
    }
    .amount:focus{
        outline: none;
    }
    .amount::selection{
        color: #fff;
        background: #0078d7;
    }
    .value-input .field{
        width: 88px;
        height: 27px;
    }
    .more{
        width: 30px;
        fill: #888;
    }
    .hint{
        position: absolute;
        left: calc(50% + 335px);
        top: 645px;
        padding: 3px 6px 4px 5px;
        font-family: "Open Sans", "Noto Sans", sans-serif;
        color: #000;
        background: #f2f2f2;
    }
    .nav-bar{
        position: absolute;
        left: calc(50% - 143px);
        bottom: 8px;
        display: flex;
        gap: 8px;
        box-sizing: border-box;
        width: 296px;
        height: 30px;
        padding-left: 3px;
        background: #f2f2f2;
    }
    .nav-bar button{
        padding-right: 4px;
    }
    .nav-bar .far{
        gap: 6px;
        padding: 0;
    }
    .nav-bar .near{
        gap: 2px;
        padding: 0;
    }

    .timeline{
        display: flex;
        align-items: flex-start;
        flex: none;
        box-sizing: border-box;
        height: 52px;
        background: #f2f2f2;
        border-top: 1px solid #ccc;
    }
    .playback{
        display: flex;
        align-items: center;
        gap: 16px;
        padding-left: 12px;
        height: 61px;
        fill: #555;
    }
    .timeline ol{
        display: flex;
        margin-left: 25px;
        padding-top: 14px;
        height: 37px;
    }
    .timeline li{
        display: flex;
        flex: none;
        flex-direction: column;
        align-items: center;
        justify-content: space-between;
        box-sizing: border-box;
        width: 30px;
        height: 37px;
        padding-top: 5px;
        border-bottom: 2px solid #ccc;
    }
    .timeline li::after{
        content: "";
        width: 3px;
        height: 6px;
        background: #ccc;
    }
    .faded svg{
        opacity: .25;
    }
    .selected svg{
        padding: 5px;
        margin: -5px 0;
        background: #0696d7;
    }
    .marker{
        margin: 11px 0 0 -8px;
    }
    .timeline .settings{
        margin: 19px 8px 0 auto;
    }
</style>
